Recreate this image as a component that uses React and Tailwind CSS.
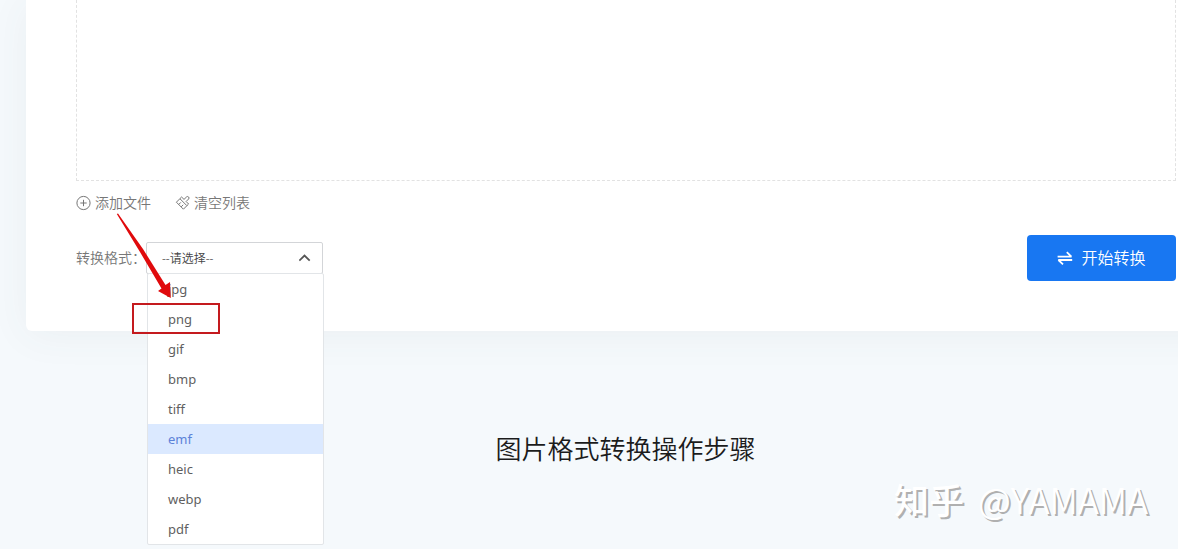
import { useState } from 'react';

const formats = ['jpg', 'png', 'gif', 'bmp', 'tiff', 'emf', 'heic', 'webp', 'pdf'];

const PlusCircleIcon = () => (
    <svg className="w-4 h-4" viewBox="0 0 16 16" fill="none" stroke="currentColor" strokeWidth="1" aria-hidden="true">
        <circle cx="7.5" cy="8" r="6.6" />
        <path d="M7.5 4.8v6.4M4.3 8h6.4" />
    </svg>
);

const BrushIcon = () => (
    <svg className="w-4 h-4" viewBox="0 0 16 16" fill="none" stroke="currentColor" strokeWidth="1" strokeLinejoin="round" aria-hidden="true">
        <path d="M6.6 2 9 4.4 11.6 1.9Q12.6 1 13.6 2 14.6 3 13.6 4L11.1 6.5 13.6 9 11.9 10.7 4.9 3.7Z" />
        <path d="M4.9 3.7 1.4 7.2 8.4 14.2 11.9 10.7" />
        <path d="M3.7 9.5 5.8 7.4M6.1 11.9 8.2 9.8" />
    </svg>
);

const SwapIcon = () => (
    <svg className="w-4 h-4" viewBox="0 0 16 16" fill="none" stroke="currentColor" strokeWidth="1.8" aria-hidden="true">
        <path d="M0.6 6.6h14M9.8 2.2 14.4 6.6M15.2 10H1.2M6 14.4 1.4 10" />
    </svg>
);

const FormatSelect = () => {
    const [value, setValue] = useState('');
    const [open, setOpen] = useState(true);

    const choose = (format) => {
        setValue(format);
        setOpen(false);
    };

    return (
        <div className="relative w-[177px]">
            <select
                id="format"
                value={value}
                onChange={(e) => choose(e.target.value)}
                className="block w-full h-8 pt-0.5 pl-[15px] pr-8 appearance-none bg-white border border-[#d3d5d8] rounded-xs text-xs font-[350] text-[#444]"
            >
                <option value="">--请选择--</option>
                {formats.map((format) => (
                    <option key={format} value={format}>{format}</option>
                ))}
            </select>
            <svg className="absolute right-3 top-2.5 w-3 h-3 pointer-events-none text-[#555]" viewBox="0 0 12 12" fill="none" stroke="currentColor" strokeWidth="1.8" aria-hidden="true">
                <path d="M0.3 8.6 5.5 3.6 10.7 8.6" />
            </svg>

            {open && (
                <ul className="absolute left-px top-[31px] z-10 w-full bg-white border border-[#e2e5e8] rounded-xs">
                    {formats.map((format) => (
                        <li key={format} className="relative">
                            <button
                                type="button"
                                onClick={() => choose(format)}
                                className={`block w-full h-[30px] pt-0.5 pl-5 text-left text-[13px] ${format === 'emf' ? 'bg-[#dbe9ff] text-[#5b82d8]' : 'text-[#5f5f5f]'}`}
                            >
                                {format}
                            </button>
                            {format === 'png' && (
                                <span className="absolute -left-4 -top-px w-[88px] h-[31px] border-2 border-[#c41a1e] pointer-events-none" />
                            )}
                        </li>
                    ))}
                </ul>
            )}

            <svg className="absolute -left-8 -top-8 z-20 w-16 h-24 pointer-events-none" viewBox="0 0 64 96" fill="#e00a0c" aria-hidden="true">
                <path d="M2.8 4 4 3.6 29 39 51.5 75 56 72 56.8 88 44 81 47.5 78.5 26 42Z" />
            </svg>
        </div>
    );
};

const Converter = () => (
    <section className="ml-[26px] -mr-12 pl-[50px] pr-[50px] pb-[50px] bg-white rounded-bl-md shadow-[0_4px_40px_rgba(60,80,90,0.06)]">
        <div className="h-[181px] border border-t-0 border-dashed border-[#e2e2e2]" />

        <div className="flex gap-6 pt-3 text-sm font-[350] text-[#777]">
            <button type="button" className="flex items-center gap-[3px]">
                <PlusCircleIcon />
                添加文件
            </button>
            <button type="button" className="flex items-center gap-[3px]">
                <BrushIcon />
                清空列表
            </button>
        </div>

        <div className="flex items-center justify-between pt-[22px]">
            <div className="flex items-center">
                <label htmlFor="format" className="w-[70px] text-sm font-[350] text-[#777]">转换格式：</label>
                <FormatSelect />
            </div>
            <button type="button" className="flex items-center justify-center gap-2 w-[149px] h-[46px] rounded-sm bg-[#1877f2] text-base font-[350] text-white">
                <SwapIcon />
                开始转换
            </button>
        </div>
    </section>
);

const App = () => (
    <main className="relative min-h-screen bg-[#f5f9fc] overflow-hidden font-['Noto_Sans','Noto_Sans_CJK_SC',sans-serif]">
        <Converter />
        <h2 className="pt-24 pl-[73px] text-center text-[26px] font-[350] leading-[44px] text-[#1c1c1c]">图片格式转换操作步骤</h2>
        <p className="absolute right-[30px] bottom-6 flex items-center gap-3.5 font-['Noto_Sans_CJK_SC',sans-serif] text-[35px] font-[350] leading-[52px] text-white [text-shadow:2px_2px_0_#b0b0b0]">
            <span className="font-medium">知乎</span>
            <span>@YAMAMA</span>
        </p>
    </main>
);

export default App;
